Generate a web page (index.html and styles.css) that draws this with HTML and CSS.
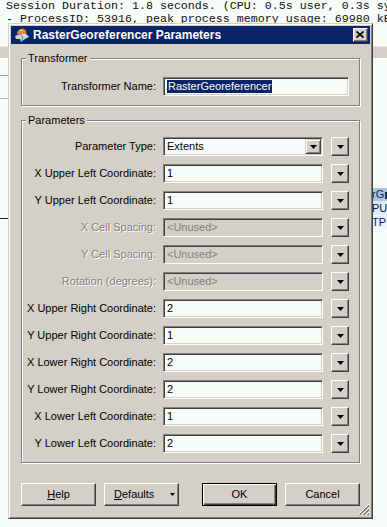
FILE: index.html
```html
<!DOCTYPE html>
<html>
<head>
<meta charset="utf-8">
<link rel="stylesheet" href="styles.css">
</head>
<body>
<pre class="console">Session Duration: 1.8 seconds. (CPU: 0.5s user, 0.3s sys)
- ProcessID: 53916, peak process memory usage: 69980 kB</pre>

<div class="bg-band"></div>
<div class="bg-line bg-line-a"></div>
<div class="bg-line bg-line-b"></div>
<div class="bg-line bg-line-c"></div>
<div class="bg-rows">
  <div class="bg-row r1">rG<span class="mark"></span></div>
  <div class="bg-row r2">PUT</div>
  <div class="bg-row r3">TP<span class="mark"></span></div>
</div>

<div class="dialog">
  <div class="titlebar">
    <svg class="app-icon" width="16" height="16" viewBox="0 0 16 16">
      <path d="M3 7 C3 3 7 1 10 2 C12 3 13 5 12 7 Z" fill="#f08a1c"/>
      <path d="M5 4 C6 3 8 3 9 4" stroke="#ffd27a" stroke-width="1" fill="none"/>
      <path d="M1 9 L6 7 L12 7 L15 10 L11 12 L7 15 L6 12 L2 12 Z" fill="#c9d3e3"/>
      <path d="M6 7 L9 10 L7 15" stroke="#6b7fa6" stroke-width="1" fill="none"/>
      <path d="M12 7 L15 10" stroke="#8fa0c0" stroke-width="1" fill="none"/>
    </svg>
    <span class="title">RasterGeoreferencer Parameters</span>
    <div class="close-btn">
      <svg width="8" height="7" viewBox="0 0 8 7"><path d="M0.5 0.5 L7.5 6.5 M7.5 0.5 L0.5 6.5" stroke="#000" stroke-width="1.7"/></svg>
    </div>
  </div>

  <div class="body">
    <div class="group group-transformer">
      <span class="legend">Transformer</span>
      <div class="name-row">
        <span class="lbl">Transformer Name:</span>
        <div class="field"><span class="sel">RasterGeoreferencer</span></div>
      </div>
    </div>

    <div class="group group-params">
      <span class="legend">Parameters</span>
      <div class="param-grid">
        <span class="lbl">Parameter Type:</span>
        <div class="field combo"><span class="val">Extents</span><span class="combo-btn"><svg width="7" height="4" viewBox="0 0 7 4"><path d="M0 0 H7 L3.5 4 Z" fill="#000"/></svg></span></div>
        <span class="side-btn"><svg width="7" height="4" viewBox="0 0 7 4"><path d="M0 0 H7 L3.5 4 Z" fill="#000"/></svg></span>

        <span class="lbl">X Upper Left Coordinate:</span>
        <div class="field">1</div>
        <span class="side-btn"><svg width="7" height="4" viewBox="0 0 7 4"><path d="M0 0 H7 L3.5 4 Z" fill="#000"/></svg></span>

        <span class="lbl">Y Upper Left Coordinate:</span>
        <div class="field">1</div>
        <span class="side-btn"><svg width="7" height="4" viewBox="0 0 7 4"><path d="M0 0 H7 L3.5 4 Z" fill="#000"/></svg></span>

        <span class="lbl disabled">X Cell Spacing:</span>
        <div class="field disabled">&lt;Unused&gt;</div>
        <span class="side-btn"><svg width="7" height="4" viewBox="0 0 7 4"><path d="M0 0 H7 L3.5 4 Z" fill="#000"/></svg></span>

        <span class="lbl disabled">Y Cell Spacing:</span>
        <div class="field disabled">&lt;Unused&gt;</div>
        <span class="side-btn"><svg width="7" height="4" viewBox="0 0 7 4"><path d="M0 0 H7 L3.5 4 Z" fill="#000"/></svg></span>

        <span class="lbl disabled">Rotation (degrees):</span>
        <div class="field disabled">&lt;Unused&gt;</div>
        <span class="side-btn"><svg width="7" height="4" viewBox="0 0 7 4"><path d="M0 0 H7 L3.5 4 Z" fill="#000"/></svg></span>

        <span class="lbl">X Upper Right Coordinate:</span>
        <div class="field">2</div>
        <span class="side-btn"><svg width="7" height="4" viewBox="0 0 7 4"><path d="M0 0 H7 L3.5 4 Z" fill="#000"/></svg></span>

        <span class="lbl">Y Upper Right Coordinate:</span>
        <div class="field">1</div>
        <span class="side-btn"><svg width="7" height="4" viewBox="0 0 7 4"><path d="M0 0 H7 L3.5 4 Z" fill="#000"/></svg></span>

        <span class="lbl">X Lower Right Coordinate:</span>
        <div class="field">2</div>
        <span class="side-btn"><svg width="7" height="4" viewBox="0 0 7 4"><path d="M0 0 H7 L3.5 4 Z" fill="#000"/></svg></span>

        <span class="lbl">Y Lower Right Coordinate:</span>
        <div class="field">2</div>
        <span class="side-btn"><svg width="7" height="4" viewBox="0 0 7 4"><path d="M0 0 H7 L3.5 4 Z" fill="#000"/></svg></span>

        <span class="lbl">X Lower Left Coordinate:</span>
        <div class="field">1</div>
        <span class="side-btn"><svg width="7" height="4" viewBox="0 0 7 4"><path d="M0 0 H7 L3.5 4 Z" fill="#000"/></svg></span>

        <span class="lbl">Y Lower Left Coordinate:</span>
        <div class="field">2</div>
        <span class="side-btn"><svg width="7" height="4" viewBox="0 0 7 4"><path d="M0 0 H7 L3.5 4 Z" fill="#000"/></svg></span>
      </div>
    </div>

    <div class="buttons">
      <div class="btn-group">
        <div class="btn"><u>H</u>elp</div>
        <div class="btn btn-defaults"><span><u>D</u>efaults</span><svg width="5" height="3" viewBox="0 0 5 3"><path d="M0 0 H5 L2.5 3 Z" fill="#000"/></svg></div>
      </div>
      <div class="btn-group">
        <div class="btn btn-default">OK</div>
        <div class="btn">Cancel</div>
      </div>
    </div>
  </div>

  <svg class="grip" width="13" height="13" viewBox="0 0 13 13">
    <path d="M12 1 L1 12 M12 5 L5 12 M12 9 L9 12" stroke="#fff" stroke-width="1"/>
    <path d="M12 2 L2 12 M12 3 L3 12 M12 6 L6 12 M12 7 L7 12 M12 10 L10 12 M12 11 L11 12" stroke="#808080" stroke-width="1"/>
  </svg>
</div>
</body>
</html>
```

FILE: styles.css
```css
html, body {
  margin: 0;
  padding: 0;
}
body {
  position: relative;
  width: 387px;
  height: 527px;
  overflow: hidden;
  background: #f8fcf8;
  font-family: "Liberation Sans", Arial, sans-serif;
  font-size: 11px;
  color: #000;
}

.console {
  margin: 0;
  padding: 0 0 0 6px;
  font-family: "Liberation Mono", "Courier New", monospace;
  font-size: 11.67px;
  line-height: 13px;
  white-space: pre;
  color: #111;
}

/* application window behind the dialog */
.bg-band {
  position: absolute;
  left: 0;
  right: 0;
  top: 46px;
  height: 11px;
  background: #d4d0c8;
  border-top: 1px solid #e8e8e4;
  border-bottom: 1px solid #fff;
}
.bg-line {
  position: absolute;
  height: 1px;
}
.bg-line-a { left: 0; width: 10px; top: 75px; background: #9a9a9a; }
.bg-line-b { left: 0; width: 10px; top: 98px; background: #b0b0b0; }
.bg-line-c { left: 0; width: 10px; top: 218px; background: #202020; }
.bg-rows {
  position: absolute;
  left: 371px;
  top: 188px;
  width: 16px;
  overflow: hidden;
}
.bg-row {
  height: 14px;
  line-height: 14px;
  font-size: 11px;
  color: #102040;
  white-space: nowrap;
  padding-left: 1px;
}
.bg-row.r1 { background: #aac4e4; height: 13px; line-height: 13px; }
.bg-row.r2 { background: #dfeaf8; }
.bg-row.r3 { background: #eef4fc; }
.mark {
  display: inline-block;
  width: 3px;
  height: 7px;
  background: #203050;
  margin-left: 1px;
  vertical-align: -1px;
}

/* dialog */
.dialog {
  position: absolute;
  left: 8px;
  top: 23px;
  width: 365px;
  height: 496px;
  box-sizing: border-box;
  background: #d4d0c8;
  border: 1px solid;
  border-color: #d4d0c8 #404040 #404040 #d4d0c8;
  box-shadow: inset 1px 1px 0 #fff, inset -1px -1px 0 #808080;
  padding: 2px;
  display: flex;
  flex-direction: column;
}

.titlebar {
  height: 18px;
  background: #0a246a;
  display: flex;
  align-items: center;
  padding: 0 2px;
}
.app-icon {
  margin-left: 1px;
  flex: none;
}
.title {
  margin-left: 3px;
  color: #fff;
  font-weight: bold;
  font-size: 12px;
  white-space: nowrap;
}
.close-btn {
  margin-left: auto;
  width: 15px;
  height: 14px;
  box-sizing: border-box;
  background: #d4d0c8;
  border: 1px solid;
  border-color: #fff #404040 #404040 #fff;
  box-shadow: inset -1px -1px 0 #808080;
  display: flex;
  align-items: center;
  justify-content: center;
  padding: 0 1px 1px 0;
}

.body {
  flex: 1;
  padding: 0 10px;
  display: flex;
  flex-direction: column;
}

.group {
  border: 1px solid #808080;
  box-shadow: 1px 1px 0 #fff, inset 1px 1px 0 #fff;
  display: flex;
  flex-direction: column;
}
.legend {
  align-self: flex-start;
  margin: -7px 0 0 4px;
  padding: 0 2px;
  line-height: 13px;
  height: 13px;
  background: #d4d0c8;
}
.group-transformer {
  margin-top: 14px;
  padding-bottom: 9px;
}
.group-params {
  margin-top: 14px;
  padding-bottom: 9px;
}

.name-row {
  margin-top: 12px;
  display: grid;
  grid-template-columns: 134px 186px;
  column-gap: 7px;
  align-items: center;
}
.param-grid {
  margin-top: 10px;
  display: grid;
  grid-template-columns: 134px 160px 18px;
  grid-auto-rows: 19px;
  column-gap: 7px;
  row-gap: 8px;
  align-items: center;
}
.param-grid .side-btn {
  margin-left: 1px;
}

.lbl {
  text-align: right;
  white-space: nowrap;
  line-height: 13px;
}
.lbl.disabled {
  color: #808080;
  text-shadow: 1px 1px 0 #fff;
}

.field {
  box-sizing: border-box;
  height: 19px;
  background: #f8fcf8;
  border: 1px solid;
  border-color: #808080 #fff #fff #808080;
  box-shadow: inset 1px 1px 0 #404040, inset -1px -1px 0 #d4d0c8;
  padding-left: 3px;
  line-height: 17px;
  white-space: nowrap;
  overflow: hidden;
}
.field.disabled {
  background: #d4d0c8;
  color: #808080;
}
.sel {
  display: inline-block;
  background: #0a246a;
  color: #fff;
  line-height: 13px;
  padding: 0 1px;
  vertical-align: middle;
  margin-top: -2px;
}
.combo {
  display: flex;
  align-items: center;
  padding-right: 1px;
}
.combo .val {
  flex: 1;
}
.combo-btn {
  width: 16px;
  height: 15px;
  box-sizing: border-box;
  background: #d4d0c8;
  border: 1px solid;
  border-color: #d4d0c8 #404040 #404040 #d4d0c8;
  box-shadow: inset 1px 1px 0 #fff, inset -1px -1px 0 #808080;
  display: flex;
  align-items: center;
  justify-content: center;
}

.side-btn {
  width: 18px;
  height: 19px;
  box-sizing: border-box;
  background: #d4d0c8;
  border: 1px solid;
  border-color: #fff #404040 #404040 #fff;
  box-shadow: inset -1px -1px 0 #808080;
  display: flex;
  align-items: center;
  justify-content: center;
}
.side-btn svg, .combo-btn svg {
  display: block;
}

.buttons {
  margin-top: 20px;
  display: flex;
  justify-content: space-between;
}
.btn-group {
  display: flex;
  gap: 8px;
}
.btn {
  width: 75px;
  height: 23px;
  box-sizing: border-box;
  background: #d4d0c8;
  border: 1px solid;
  border-color: #fff #404040 #404040 #fff;
  box-shadow: inset -1px -1px 0 #808080;
  display: flex;
  align-items: center;
  justify-content: center;
  line-height: 13px;
}
.btn u {
  text-decoration: underline;
  text-underline-offset: 1px;
}
.btn-default {
  border-color: #000;
  box-shadow: inset 1px 1px 0 #fff, inset -1px -1px 0 #404040, inset -2px -2px 0 #808080;
}
.btn-defaults {
  justify-content: flex-start;
  padding-left: 9px;
}
.btn-defaults svg {
  margin-left: 16px;
  display: block;
}

.grip {
  position: absolute;
  right: 2px;
  bottom: 2px;
}
```
